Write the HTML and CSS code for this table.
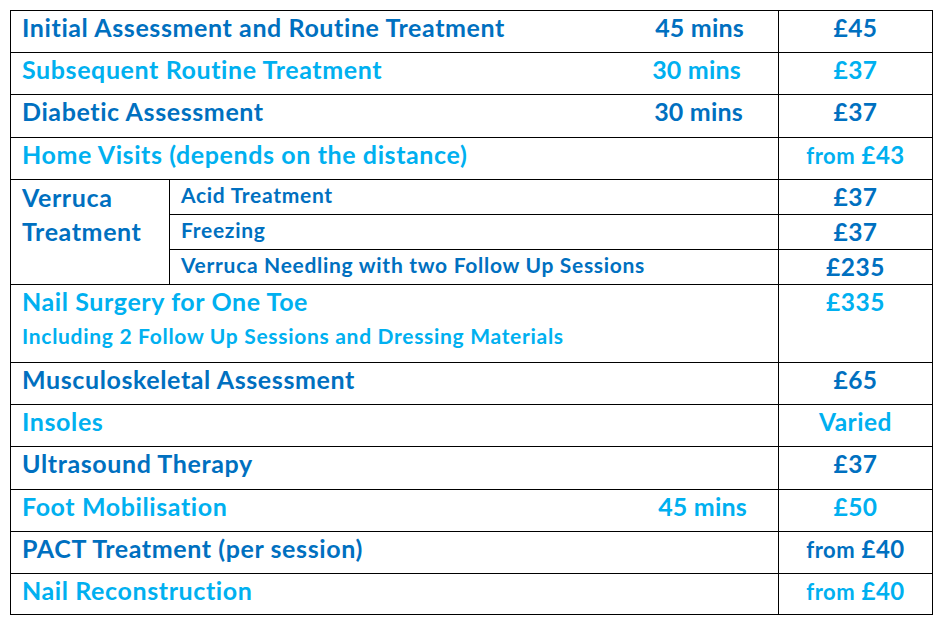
FILE: index.html
```html
<!DOCTYPE html>
<html>
<head>
<meta charset="utf-8">
<link rel="stylesheet" href="styles.css">
</head>
<body>
<div class="price-table">
  <div class="cell desc span2 dark r1"><span>Initial Assessment and Routine Treatment</span><span class="mins">45 mins</span></div>
  <div class="cell price dark">£45</div>

  <div class="cell desc span2 light"><span>Subsequent Routine Treatment</span><span class="mins m2">30 mins</span></div>
  <div class="cell price light">£37</div>

  <div class="cell desc span2 dark"><span>Diabetic Assessment</span><span class="mins m3">30 mins</span></div>
  <div class="cell price dark">£37</div>

  <div class="cell desc span2 light"><span>Home Visits (depends on the distance)</span></div>
  <div class="cell price light from"><span class="from-word">from</span> £43</div>

  <div class="cell verruca dark">Verruca<br>Treatment</div>
  <div class="cell sub dark">Acid Treatment</div>
  <div class="cell price subprice dark">£37</div>
  <div class="cell sub dark">Freezing</div>
  <div class="cell price subprice dark">£37</div>
  <div class="cell sub dark">Verruca Needling with two Follow Up Sessions</div>
  <div class="cell price subprice dark">£235</div>

  <div class="cell desc span2 light stack"><span>Nail Surgery for One Toe</span><span class="note">Including 2 Follow Up Sessions and Dressing Materials</span></div>
  <div class="cell price light">£335</div>

  <div class="cell desc span2 dark"><span>Musculoskeletal Assessment</span></div>
  <div class="cell price dark">£65</div>

  <div class="cell desc span2 light"><span>Insoles</span></div>
  <div class="cell price light">Varied</div>

  <div class="cell desc span2 dark"><span>Ultrasound Therapy</span></div>
  <div class="cell price dark">£37</div>

  <div class="cell desc span2 light"><span>Foot Mobilisation</span><span class="mins m4">45 mins</span></div>
  <div class="cell price light">£50</div>

  <div class="cell desc span2 dark"><span>PACT Treatment (per session)</span></div>
  <div class="cell price dark from"><span class="from-word">from</span> £40</div>

  <div class="cell desc span2 light"><span>Nail Reconstruction</span></div>
  <div class="cell price light from"><span class="from-word">from</span> £40</div>
</div>
</body>
</html>
```

FILE: styles.css
```css
html, body {
  margin: 0;
  padding: 0;
  background: #ffffff;
}

body {
  font-family: "Lato", "Liberation Sans", sans-serif;
  font-weight: 700;
  font-size: 25px;
  letter-spacing: 0.6px;
}

.price-table {
  margin: 10px 0 0 10px;
  width: 923px;
  display: grid;
  grid-template-columns: 158px 608px 153px;
  grid-template-rows: 41px 41px 42px 41px 34px 34px 34px 77px 41px 41px 42px 41px 41px 40px;
  gap: 1px;
  padding: 1px;
  background: #000000;
  box-sizing: border-box;
}

.cell {
  background: #ffffff;
  box-sizing: border-box;
  line-height: 29px;
  padding-top: 2px;
  white-space: nowrap;
}

.dark { color: #0070c0; }
.light { color: #00b0f0; }

.span2 { grid-column: span 2; }

.desc {
  display: flex;
  justify-content: space-between;
  padding-left: 11px;
  padding-right: 34px;
}

.mins { letter-spacing: 0.2px; }
.m2 { margin-right: 3px; }
.m3 { margin-right: 1px; }
.m4 { margin-right: -3px; }

.stack {
  flex-direction: column;
  justify-content: flex-start;
}

.note {
  font-size: 21px;
  letter-spacing: 0.7px;
  line-height: 39px;
}

.price {
  text-align: center;
  font-size: 24.5px;
  letter-spacing: 0.5px;
}

.from { font-size: 24px; }
.from-word { font-size: 22px; }

.verruca {
  grid-row: span 3;
  padding-left: 11px;
  padding-top: 0;
  line-height: 34px;
}

.sub {
  font-size: 21px;
  letter-spacing: 0.7px;
  line-height: 24px;
  padding-left: 11px;
  padding-top: 3px;
}

.subprice {
  padding-top: 2px;
}
```
